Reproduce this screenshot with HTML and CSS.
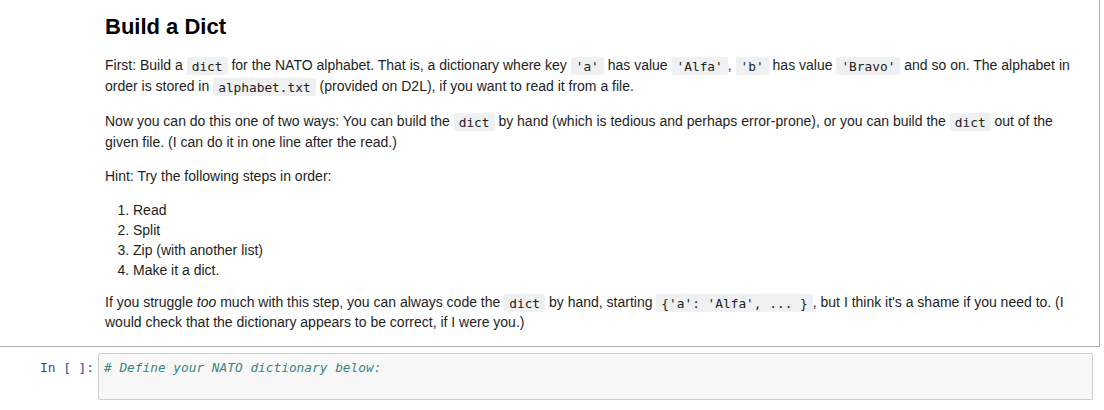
FILE: index.html
```html
<!DOCTYPE html>
<html>
<head>
<meta charset="utf-8">
<link rel="stylesheet" href="styles.css">
</head>
<body>
<div class="notebook">
  <div class="md-cell">
    <div class="rendered">
      <h2>Build a Dict</h2>
      <p>First: Build a <code>dict</code> for the NATO alphabet. That is, a dictionary where key <code>'a'</code> has value <code>'Alfa'</code>, <code>'b'</code> has value <code>'Bravo'</code> and so on. The alphabet in order is stored in <code>alphabet.txt</code> (provided on D2L), if you want to read it from a file.</p>
      <p>Now you can do this one of two ways: You can build the <code>dict</code> by hand (which is tedious and perhaps error-prone), or you can build the <code>dict</code> out of the given file. (I can do it in one line after the read.)</p>
      <p>Hint: Try the following steps in order:</p>
      <ol>
        <li>Read</li>
        <li>Split</li>
        <li>Zip (with another list)</li>
        <li>Make it a dict.</li>
      </ol>
      <p class="closing">If you struggle <em>too</em> much with this step, you can always code the <code>dict</code> by hand, starting <code>{'a': 'Alfa', ... }</code>, but I think it's a shame if you need to. (I would check that the dictionary appears to be correct, if I were you.)</p>
    </div>
  </div>
  <div class="code-cell">
    <div class="prompt">In&nbsp;[&nbsp;]:</div>
    <div class="input-area"><span class="comment"># Define your NATO dictionary below:</span></div>
  </div>
</div>
</body>
</html>
```
FILE: styles.css
```css
html, body {
  margin: 0;
  padding: 0;
  background: #ffffff;
}

body {
  font-family: "Liberation Sans", Arial, sans-serif;
  font-size: 14px;
  line-height: 20px;
  color: #1e1e1e;
}

.notebook {
  display: flex;
  flex-direction: column;
  width: 1104px;
}

.md-cell {
  width: 1100px;
  box-sizing: border-box;
  border-right: 1px solid #ababab;
  border-bottom: 1px solid #ababab;
  padding: 14px 17px 14px 105px;
}

.rendered h2 {
  font-size: 22px;
  line-height: 26px;
  font-weight: bold;
  color: #000000;
  margin: 0 0 15px 0;
}

.rendered p {
  margin: 0 0 14px 0;
}

.rendered p:last-child {
  margin-bottom: 0;
}

.rendered ol {
  margin: 0 0 12px 0;
  padding-left: 28px;
}

.rendered code {
  font-family: "DejaVu Sans Mono", "Liberation Mono", monospace;
  font-size: 12.8px;
  line-height: 21px;
  color: #222222;
  background: #eff0f1;
  padding: 1.5px 5px;
  border-radius: 2px;
}

.rendered p.closing code {
  line-height: 18px;
}

.code-cell {
  display: flex;
  flex-direction: row;
  margin-top: 6px;
}

.prompt {
  width: 98px;
  box-sizing: border-box;
  padding-right: 4px;
  padding-top: 6px;
  text-align: right;
  font-family: "DejaVu Sans Mono", "Liberation Mono", monospace;
  font-size: 12.8px;
  line-height: 17px;
  color: #303f9f;
}

.input-area {
  width: 995px;
  height: 47px;
  box-sizing: border-box;
  background: #f7f7f7;
  border: 1px solid #cfcfcf;
  border-radius: 2px;
  padding: 5px 5px;
  font-family: "DejaVu Sans Mono", "Liberation Mono", monospace;
  font-size: 12.8px;
  line-height: 17px;
}

.comment {
  color: #3a8585;
  font-style: italic;
}
```
